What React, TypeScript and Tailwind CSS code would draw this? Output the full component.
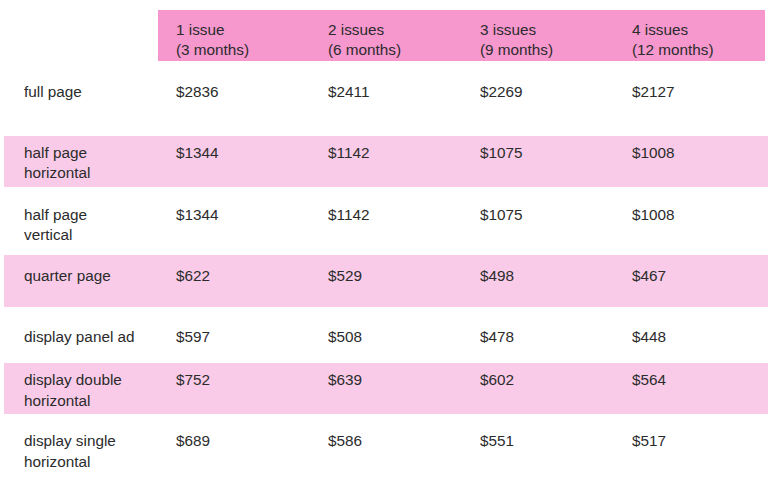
const headers = [
  ["1 issue", "(3 months)"],
  ["2 issues", "(6 months)"],
  ["3 issues", "(9 months)"],
  ["4 issues", "(12 months)"],
];

type Row = {
  label: string[];
  prices: string[];
  pink: boolean;
  h: string;
  pt: string;
};

const rows: Row[] = [
  { label: ["full page"], prices: ["$2836", "$2411", "$2269", "$2127"], pink: false, h: "h-[75px]", pt: "pt-[20.5px]" },
  { label: ["half page", "horizontal"], prices: ["$1344", "$1142", "$1075", "$1008"], pink: true, h: "h-[51px]", pt: "pt-[6.5px]" },
  { label: ["half page", "vertical"], prices: ["$1344", "$1142", "$1075", "$1008"], pink: false, h: "h-[68px]", pt: "pt-[17.5px]" },
  { label: ["quarter page"], prices: ["$622", "$529", "$498", "$467"], pink: true, h: "h-[51.5px]", pt: "pt-[10.5px]" },
  { label: ["display panel ad"], prices: ["$597", "$508", "$478", "$448"], pink: false, h: "h-[56px]", pt: "pt-[20.5px]" },
  { label: ["display double", "horizontal"], prices: ["$752", "$639", "$602", "$564"], pink: true, h: "h-[51px]", pt: "pt-[7.5px]" },
  { label: ["display single", "horizontal"], prices: ["$689", "$586", "$551", "$517"], pink: false, h: "h-[71px]", pt: "pt-[17.5px]" },
];

const cols = "grid grid-cols-[154px_152px_152px_152px_151px]";

export default function App() {
  return (
    <div className="min-h-[484px] w-[768px] bg-white pt-[10px] pl-[4px] font-['Liberation_Sans',Arial,sans-serif] text-[15.3px] leading-[20.5px] text-[#2b2b2b]">
      {/* header */}
      <div className={cols + " h-[51px]"}>
        <div />
        {headers.map((h, i) => (
          <div key={i} className="bg-[#f698ce] pt-[9.5px] pl-[18px]">
            <div>{h[0]}</div>
            <div>{h[1]}</div>
          </div>
        ))}
      </div>

      {rows.map((r, i) => (
        <div
          key={i}
          className={cols + " " + r.h + " " + r.pt + (r.pink ? " bg-[#facbe8]" : "")}
        >
          <div className="pl-[20px]">
            {r.label.map((l, j) => (
              <div key={j}>{l}</div>
            ))}
          </div>
          {r.prices.map((p, j) => (
            <div key={j} className="pl-[18px]">
              {p}
            </div>
          ))}
        </div>
      ))}
    </div>
  );
}
